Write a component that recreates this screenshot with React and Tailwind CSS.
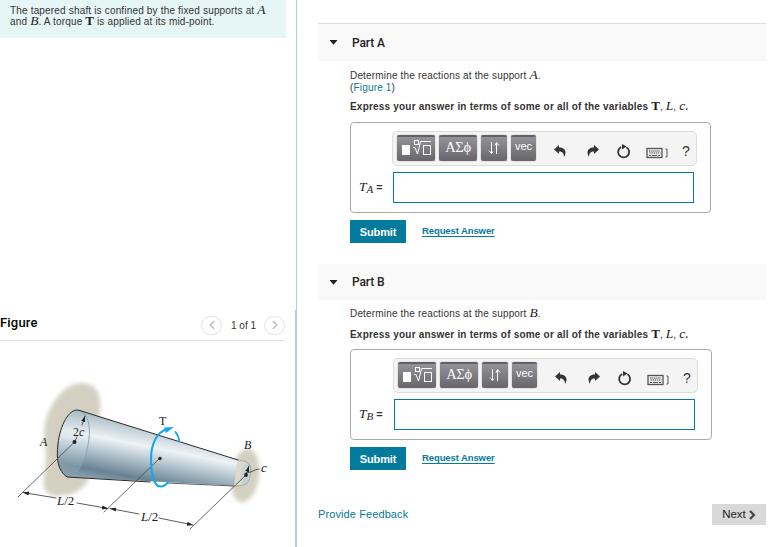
import { ChevronLeft, ChevronRight } from "lucide-react";

const MathVar = ({ children, bold }) => (
  <span
    className={
      bold
        ? "font-['Liberation_Serif',serif] text-[13px] leading-[0] font-bold tracking-normal text-[#222]"
        : "font-['Liberation_Serif',serif] text-[13.500px] leading-[0] font-normal italic tracking-normal text-[#222]"
    }
  >
    {children}
  </span>
);

const toolButton =
  "flex h-[26px] items-center justify-center rounded-[2px] border-t-2 border-[#626266] bg-linear-to-b from-[#929298] to-[#67676b] text-white shadow-[0_0_1px_#555]";

const Toolbar = () => (
  <div className="flex h-[35px] w-[305px] rounded-[5px] border border-[#dcdcdc] bg-[#f4f4f4] pt-[3px] pl-[4px]">
    <div className={`${toolButton} w-[38px]`}>
      <svg width="38" height="24" viewBox="0 0 38 24" fill="none" stroke="white">
        <rect x="5" y="8" width="8" height="10" fill="white" stroke="none" />
        <rect x="17.500" y="3.500" width="4" height="4" />
        <path d="M16 10.500h2l2.500 6.500 3-12.500h10.500" />
        <rect x="26.500" y="8.500" width="7" height="9" />
      </svg>
    </div>
    <div className={`${toolButton} ml-1 w-[38px] pb-[4px] font-['Liberation_Serif',serif] text-[14.500px] leading-none tracking-[-0.3px]`}>
      ΑΣϕ
    </div>
    <div className={`${toolButton} ml-1 w-[26px] pb-[2px]`}>
      <svg width="12" height="14" viewBox="0 0 12 14" fill="none" stroke="white">
        <path d="M3.500 1v11M1 9.500l2.500 3 1.500-2M8.500 13V2M7 4.500l1.500-3 2.500 3" />
      </svg>
    </div>
    <div className={`${toolButton} ml-1 w-[25px] pb-[5px] font-['Liberation_Sans',sans-serif] text-[11px] leading-none`}>
      vec
    </div>
    <svg className="mt-[10px] ml-[18px]" width="12" height="12" viewBox="0 0 12 12" fill="#333">
      <path d="M0 4.500L5 0v2.500c4 0 6.500 2 6.500 5 0 1.500-.5 3-1.500 4.500C10 8.500 8.500 6.500 5 6.500V9z" />
    </svg>
    <svg className="mt-[10px] ml-[21px]" width="12" height="12" viewBox="0 0 12 12" fill="#333">
      <path d="M12 4.500L7 0v2.500c-4 0-6.500 2-6.500 5C.5 9 1 10.500 2 12 2 8.500 3.500 6.500 7 6.500V9z" />
    </svg>
    <svg className="mt-[8px] ml-[17px]" width="15" height="17" viewBox="0 0 15 17" fill="none">
      <path d="M10.400 4.200A5.500 5.500 0 1 1 5.200 4" stroke="#333" strokeWidth="1.800" />
      <path d="M6 1l4.500 2.500L6 6.500z" fill="#333" />
    </svg>
    <svg className="mt-[12px] ml-[15px]" width="24" height="12" viewBox="0 0 24 12" fill="none" stroke="#555">
      <rect x="1" y="1.500" width="15" height="9" fill="#eee" strokeWidth="1.300" />
      <path d="M3 4h11M3.500 6h11" stroke="#444" strokeDasharray="1.300 .8" />
      <path d="M3 8.500h2M6 8.500h5M12 8.500h2" />
      <path d="M19.500 2h1.500v8h-1.500" />
    </svg>
    <span className="mt-[8px] ml-[12px] font-['Liberation_Sans',sans-serif] text-[14px] leading-[17px] text-[#333]">?</span>
  </div>
);

const AnswerBox = ({ sub, wide }) => (
  <div
    className={
      wide
        ? "flex h-[91px] w-[362px] rounded-[4px] border border-[#aaa] pt-[8px]"
        : "flex h-[91px] w-[361px] rounded-[4px] border border-[#aaa] pt-[8px]"
    }
  >
    <div className={wide ? "w-[42px] pt-[43px] pl-[8px] whitespace-nowrap" : "w-[41px] pt-[43px] pl-[8px] whitespace-nowrap"}>
      <MathVar>T</MathVar>
      <sub className="bottom-[-2px] font-['Liberation_Serif',serif] text-[11px] text-[#222] italic">{sub}</sub>
      <span className="font-['Liberation_Sans',sans-serif] text-[11px] font-bold"> =</span>
    </div>
    <div>
      <Toolbar />
      <div className="mt-[6px] ml-px h-[31px] w-[301px] border border-[#047a9c] bg-white" />
    </div>
  </div>
);

const Submit = () => (
  <div className="mt-[7px] flex items-center">
    <button className="h-[23px] w-[56px] bg-[#047a9c] pt-px text-[11px] font-bold tracking-[-0.1px] text-white">Submit</button>
    <a className="ml-[16px] pb-[2px] text-[9.500px] leading-[13px] font-bold tracking-[-0.1px] text-[#047a9c] underline underline-offset-[1.500px]">
      Request Answer
    </a>
  </div>
);

const PartHeader = ({ children }) => (
  <>
    <svg className="mr-[14px] ml-[11px]" width="9" height="5" viewBox="0 0 9 5">
      <path d="M0.500 0h8L4.500 4.800z" fill="#222" />
    </svg>
    <h2 className="font-[Roboto,sans-serif] text-[12px] font-medium tracking-[-0.1px] text-[#222]">{children}</h2>
  </>
);

const Express = () => (
  <p className="h-[13px] text-[10px] leading-[13px] font-bold tracking-[0.200px] whitespace-pre">
    Express your answer in terms of some or all of the variables <MathVar bold>T</MathVar>
    <span className="font-normal">, </span>
    <MathVar>L</MathVar>
    <span className="font-normal">, </span>
    <MathVar>c</MathVar>.
  </p>
);

const ShaftFigure = () => (
  <svg className="block" width="285" height="206" viewBox="0 341 285 206" fill="none" strokeLinecap="round">
    <defs>
      <linearGradient id="steel" gradientUnits="userSpaceOnUse" x1="128" y1="418" x2="115" y2="484">
        <stop offset="0" stopColor="#9fb3bf" />
        <stop offset=".12" stopColor="#bccbd3" />
        <stop offset=".36" stopColor="#edf3f6" />
        <stop offset=".6" stopColor="#abbdc9" />
        <stop offset=".85" stopColor="#698394" />
        <stop offset="1" stopColor="#8ca2ae" />
      </linearGradient>
      <linearGradient id="face" x1="0" y1="0" x2="0" y2="1">
        <stop offset="0" stopColor="#a7bac5" />
        <stop offset=".4" stopColor="#e7eff3" />
        <stop offset=".72" stopColor="#a7bac5" />
        <stop offset="1" stopColor="#7f97a5" />
      </linearGradient>
      <filter id="soft" x="-20%" y="-20%" width="140%" height="140%">
        <feGaussianBlur stdDeviation="2" />
      </filter>
      <marker id="arrow" viewBox="0 0 6 4" refX="6" refY="2" markerWidth="6" markerHeight="4" markerUnits="userSpaceOnUse" orient="auto-start-reverse">
        <path d="M0 0l6 2-6 2z" fill="#222" />
      </marker>
    </defs>
    <path
      d="M82 383C96 383 102 394 100 412L88 480C84 490 72 495 59 496C46 496 41 489 45 472L46 455C46 441 42 432 46 420C52 400 64 384 82 383Z"
      fill="#d3d0c1"
      filter="url(#soft)"
    />
    <ellipse cx="245" cy="475.500" rx="14" ry="27" transform="rotate(8 245 475.500)" fill="#d3d0c1" filter="url(#soft)" />
    <path d="M78 410L240 461C248 462 251 467 251 474C251 481 248 486 242 486L67 477C58 470 56 459 58 444C60 425 68 409 78 410Z" fill="url(#steel)" />
    <path d="M78 410C88 413 91 427 89 441C87 459 79 474 69 477C58 470 56 459 58 444C60 425 68 409 78 410Z" fill="url(#face)" opacity=".45" />
    <path d="M81 411C90 417 91 430 88 445C85 462 78 473 70 477" stroke="#7ba2b9" strokeWidth=".9" />
    <path d="M238 460C246 461 251 464 251 471C252 480 248 486 242 486L234 486C236 475 235 466 238 460Z" fill="#d9d9cc" />
    <ellipse cx="246" cy="474.500" rx="5.500" ry="11" transform="rotate(8 246 474.500)" fill="#c5d2d3" />
    <path d="M238 460L78 410C69 409 60 425 58 444C56 459 58 471 67 477L150 482" stroke="#282828" strokeWidth="1" />
    <path d="M167 483L234 486" stroke="#333" strokeWidth=".8" />
    <path d="M239 460C250 461 253 467 250 476C249 483 246 486 235 486" stroke="#8f9a97" strokeWidth=".7" />

    <path d="M74.500 442L18 497M160 458L104 512M246 475L190 529" stroke="#444" strokeWidth=".8" />
    <g stroke="#333" strokeWidth=".8">
      <path d="M159 518L193 525" markerEnd="url(#arrow)" />
      <path d="M23 492.500L56 498" markerStart="url(#arrow)" />
      <path d="M110 508.500L139 514" markerStart="url(#arrow)" />
      <path d="M77 503L108 508.500" markerEnd="url(#arrow)" />
      <path d="M82 425L85 416" markerEnd="url(#arrow)" />
      <path d="M75 441L77 437" />
      <path d="M246 475L249 466" markerEnd="url(#arrow)" />
      <path d="M246 473C252 473 254 469 259 469" />
    </g>
    <g fill="#222">
      <circle cx="74.500" cy="442" r="2" />
      <circle cx="160" cy="458.500" r="1.700" />
      <circle cx="246" cy="475" r="1.900" />
    </g>

    <path d="M168 429C155 432 151 447 151 459C151 474 154 487 161 486.500C164 486 167 484 168 482" stroke="#14a9ef" strokeWidth="2.100" />
    <path d="M174 427L164 427.500L166 433Z" fill="#14a9ef" />
    <path d="M175.500 432C178 435 179 438 179 441" stroke="#14a9ef" strokeWidth="1.800" />

    <g fill="#222" fontFamily="Liberation Serif, serif" fontSize="13">
      <text x="40" y="446" fontStyle="italic" fontSize="12">A</text>
      <text x="73" y="436" fontSize="12">2<tspan fontStyle="italic">c</tspan></text>
      <text x="159" y="425" fontSize="12">T</text>
      <text x="244" y="449" fontStyle="italic" fontSize="12">B</text>
      <text x="261" y="472" fontStyle="italic">c</text>
      <text x="57" y="505"><tspan fontStyle="italic">L</tspan>/2</text>
      <text x="141" y="521"><tspan fontStyle="italic">L</tspan>/2</text>
    </g>
  </svg>
);

const circleButton = "flex h-[19px] w-[21px] items-center justify-center rounded-full border border-[#e2e2e2] text-[#bbb]";

export default function App() {
  return (
    <div className="flex h-[547px] w-[770px] overflow-hidden bg-white font-['Liberation_Sans',sans-serif] text-[#333]">
      <aside className="flex w-[295px] shrink-0 flex-col">
        <div className="h-[38px] w-[286px] bg-[#e6f5f6] pt-[5px] pl-[10px] text-[10px] leading-[11px] tracking-[0.170px] whitespace-nowrap">
          <p className="h-[11px]">The tapered shaft is confined by the fixed supports at <MathVar>A</MathVar></p>
          <p className="h-[11px]">and <MathVar>B</MathVar>. A torque <MathVar bold>T</MathVar> is applied at its mid-point.</p>
        </div>
        <div className="mt-[272px] flex h-[31px] w-[285px] items-center border-b border-[#ddd]">
          <h2 className="mt-[-5px] font-[Roboto,sans-serif] text-[13px] font-medium tracking-[0.200px] text-black">Figure</h2>
          <div className="ml-auto flex items-center">
            <div className={circleButton}>
              <ChevronLeft size={14} strokeWidth={2.5} />
            </div>
            <span className="mr-[7px] ml-[9px] w-[26px] pt-px text-[10px] whitespace-nowrap">1 of 1</span>
            <div className={circleButton}>
              <ChevronRight size={14} strokeWidth={2.5} />
            </div>
          </div>
        </div>
        <ShaftFigure />
      </aside>
      <div className="flex w-[2px] shrink-0 flex-col items-end">
        <div className="h-[310px] w-px bg-[#b8cbdc]" />
        <div className="w-[2px] flex-1 bg-[#b8cbdc]" />
      </div>

      <main className="ml-[21px] w-[448px] pt-[23px]">
        <div className="flex h-[38px] items-center border-t border-[#ddd] bg-[#f9f9f9]">
          <PartHeader>Part A</PartHeader>
        </div>
        <div className="pt-[9px] pl-[32px]">
          <p className="h-[12px] text-[10px] leading-[12px] tracking-[0.170px]">Determine the reactions at the support <MathVar>A</MathVar>.</p>
          <p className="h-[12px] text-[10px] leading-[12px] tracking-[0.170px]">(<a className="text-[#047a9c]">Figure 1</a>)</p>
          <div className="mt-[6px] mb-[9px]"><Express /></div>
          <AnswerBox sub="A" />
          <Submit />
        </div>

        <div className="mt-[21px] flex h-[36px] items-center bg-[#f9f9f9]">
          <PartHeader>Part B</PartHeader>
        </div>
        <div className="pt-[8px] pl-[32px]">
          <p className="h-[12px] text-[10px] leading-[12px] tracking-[0.170px]">Determine the reactions at the support <MathVar>B</MathVar>.</p>
          <div className="mt-[8px] mb-[8px]"><Express /></div>
          <AnswerBox sub="B" wide />
          <Submit />
        </div>

        <div className="mt-[34px] flex h-[21px] items-center justify-between">
          <a className="text-[11px] tracking-[0.100px] text-[#047a9c]">Provide Feedback</a>
          <button className="flex h-[21px] w-[54px] items-center justify-center gap-[3px] rounded-[1px] bg-[#d9d9d9] text-[11.500px] text-[#222]">
            Next
            <svg width="7" height="10" viewBox="0 0 7 10" fill="none" stroke="#444" strokeWidth="2.200">
              <path d="M1 1l4 4-4 4" />
            </svg>
          </button>
        </div>
      </main>
    </div>
  );
}
